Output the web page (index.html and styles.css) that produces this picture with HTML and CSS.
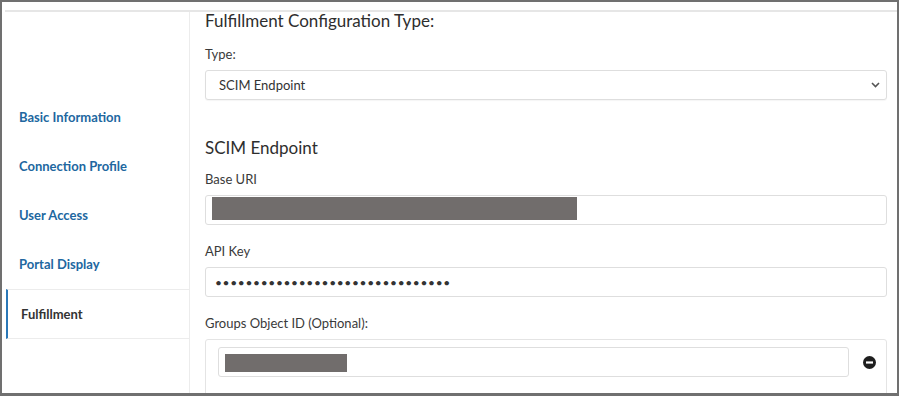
FILE: index.html
```html
<!DOCTYPE html>
<html lang="en">
<head>
<meta charset="UTF-8" />
<meta name="viewport" content="width=device-width, initial-scale=1" />
<title>Fulfillment Configuration</title>
<link rel="stylesheet" href="styles.css">
</head>
<body>

<div class="frame">
  <div class="layout">

    <!-- SIDEBAR -->
    <div class="sidebar">
      <div class="nav-item">Basic Information</div>
      <div class="nav-item">Connection Profile</div>
      <div class="nav-item">User Access</div>
      <div class="nav-item">Portal Display</div>
      <div class="nav-item active">Fulfillment</div>
    </div>

    <!-- MAIN -->
    <div class="main">
      <h2 class="section-title">Fulfillment Configuration Type:</h2>
      <div class="field">
        <label class="field-label">Type:</label>
        <div class="select">
          <span>SCIM Endpoint</span>
          <svg class="chevron" width="9" height="6" viewBox="0 0 9 6">
            <path d="M1 1 L4.5 4.5 L8 1" fill="none" stroke="#555" stroke-width="1.6" />
          </svg>
        </div>
      </div>

      <h2 class="section-title scim">SCIM Endpoint</h2>
      <div class="field">
        <label class="field-label">Base URI</label>
        <div class="input input-redacted">
          <div class="redacted redacted-long"></div>
        </div>
      </div>
      <div class="field">
        <label class="field-label">API Key</label>
        <div class="input input-dots">&bull;&bull;&bull;&bull;&bull;&bull;&bull;&bull;&bull;&bull;&bull;&bull;&bull;&bull;&bull;&bull;&bull;&bull;&bull;&bull;&bull;&bull;&bull;&bull;&bull;&bull;&bull;&bull;&bull;&bull;&bull;</div>
      </div>
      <div class="field">
        <label class="field-label">Groups Object ID (Optional):</label>
        <div class="group-box">
          <div class="group-row">
            <div class="input input-inner">
              <div class="redacted redacted-short"></div>
            </div>
            <svg class="remove-icon" width="13" height="13" viewBox="0 0 13 13">
              <circle cx="6.5" cy="6.5" r="6.5" fill="#1e1e1e" />
              <rect x="3" y="5.4" width="7" height="2.2" fill="#fff" />
            </svg>
          </div>
        </div>
      </div>
    </div>

  </div>
</div>

</body>
</html>
```

FILE: styles.css
```css
body {
  margin: 0;
  font-family: Lato, 'Open Sans', sans-serif;
  color: #333;
  background: #fff;
}
.frame {
  width: 899px;
  height: 396px;
  box-sizing: border-box;
  border: 2px solid #707070;
  border-bottom-width: 3px;
  padding: 8px 0 0 3px;
  overflow: hidden;
}
.layout {
  display: flex;
  border-top: 2px solid #e6e6e6;
  height: 100%;
}
/* SIDEBAR */
.sidebar {
  width: 185px;
  flex-shrink: 0;
  box-sizing: border-box;
  border-right: 1px solid #ececec;
  padding-top: 80px;
}
.nav-item {
  height: 48px;
  display: flex;
  align-items: center;
  padding-left: 14px;
  border-top: 1px solid transparent;
  font-size: 13px;
  font-weight: 700;
  color: #21679f;
}
.nav-item.active {
  margin-top: 1px;
  margin-left: 1px;
  padding-left: 13px;
  border-left: 2px solid #2a78b8;
  border-top-color: #ececec;
  border-bottom: 1px solid #ececec;
  color: #333;
}
/* MAIN */
.main {
  flex: 1;
  padding: 0 10px 0 15px;
}
.section-title {
  margin: 0 0 17px 0;
  font-size: 17px;
  line-height: 17px;
  font-weight: 400;
  color: #2e2e2e;
}
.section-title.scim {
  margin-top: 39px;
  margin-bottom: 15px;
}
.field {
  margin-bottom: 18px;
}
.field-label {
  display: block;
  font-size: 13px;
  line-height: 16px;
  margin-bottom: 8px;
  color: #3a3a3a;
}
.select,
.input {
  box-sizing: border-box;
  height: 30px;
  border: 1px solid #dedede;
  border-radius: 3px;
  background: #fff;
}
.select {
  display: flex;
  align-items: center;
  justify-content: space-between;
  padding: 0 6px 0 13px;
  font-size: 13px;
  color: #333;
  box-shadow: 0 1px 1px rgba(0, 0, 0, 0.04);
}
.input-redacted {
  padding: 1px 6px;
}
.redacted {
  background: #716d6c;
}
.redacted-long {
  width: 365px;
  height: 23px;
}
.input-dots {
  display: flex;
  align-items: center;
  padding-left: 9px;
  font-size: 12px;
  letter-spacing: 0.65px;
  color: #333;
}
.group-box {
  height: 60px;
  border: 1px solid #e4e4e4;
  border-radius: 3px;
  padding: 7px 0 0 12px;
}
.group-row {
  display: flex;
  align-items: center;
}
.input-inner {
  width: 631px;
  padding: 6px 6px;
}
.redacted-short {
  width: 122px;
  height: 18px;
}
.remove-icon {
  margin-left: 14px;
}
```
